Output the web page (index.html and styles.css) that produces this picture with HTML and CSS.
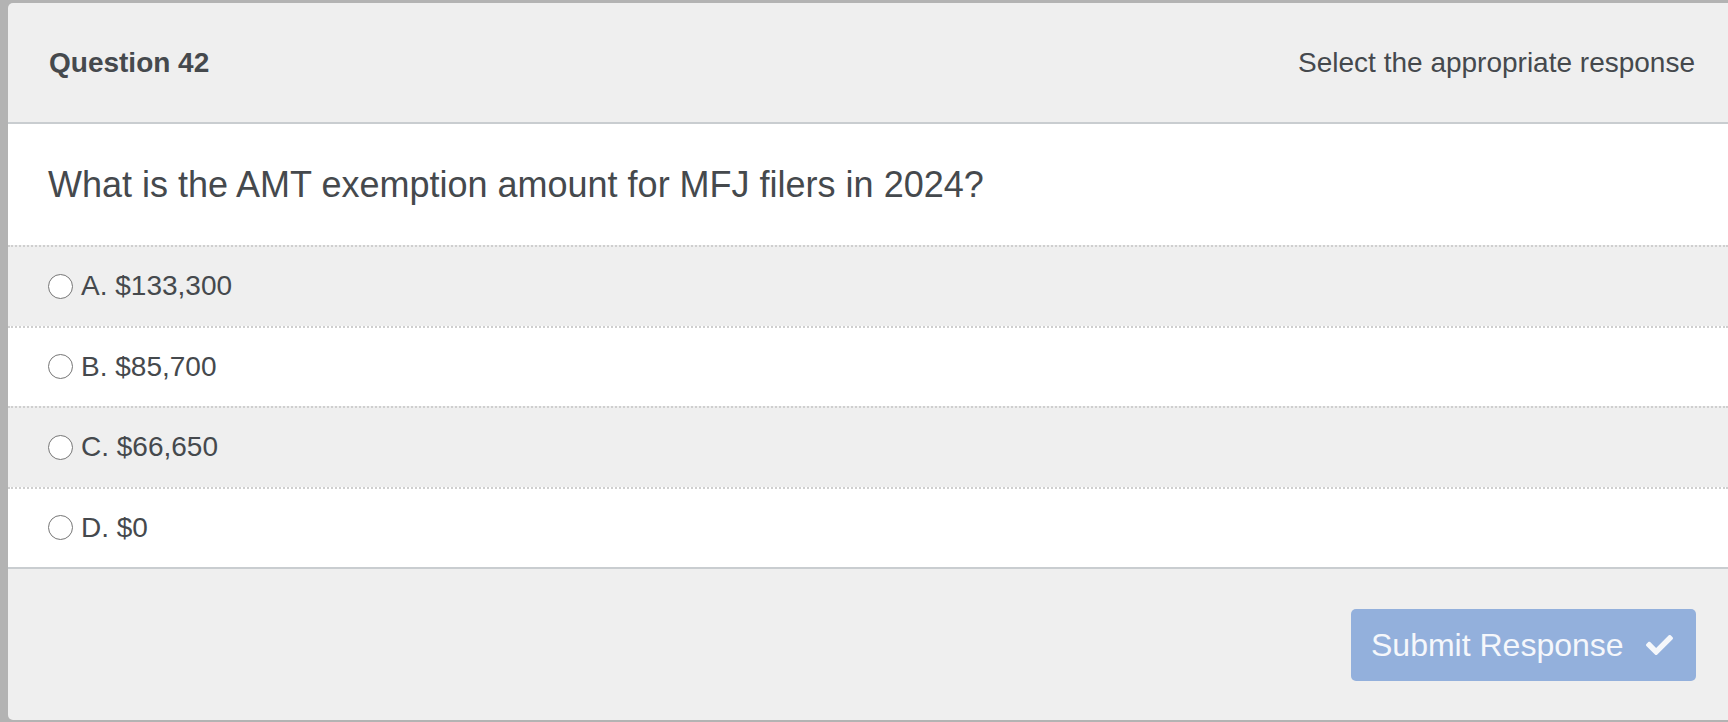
FILE: index.html
```html
<!DOCTYPE html>
<html lang="en">
<head>
<meta charset="utf-8">
<title>Question 42</title>
<link rel="stylesheet" href="styles.css">
</head>
<body>
<div class="card">
  <div class="card-header">
    <span class="q-num">Question 42</span>
    <span class="q-hint">Select the appropriate response</span>
  </div>
  <div class="q-text">What is the AMT exemption amount for MFJ filers in 2024?</div>
  <div class="options">
    <label class="option alt"><span class="radio"></span><span>A. $133,300</span></label>
    <label class="option"><span class="radio"></span><span>B. $85,700</span></label>
    <label class="option alt"><span class="radio"></span><span>C. $66,650</span></label>
    <label class="option"><span class="radio"></span><span>D. $0</span></label>
  </div>
  <div class="card-footer">
    <button class="submit" type="button">
      <span>Submit Response</span>
      <svg class="check" viewBox="0 72 512 368" width="27" height="20" aria-hidden="true"><path fill="currentColor" d="M173.898 439.404l-166.4-166.4c-9.997-9.997-9.997-26.206 0-36.204l36.203-36.204c9.997-9.998 26.207-9.998 36.204 0L192 312.69 432.095 72.596c9.997-9.997 26.207-9.997 36.204 0l36.203 36.204c9.997 9.997 9.997 26.206 0 36.204l-294.4 294.401c-9.998 9.997-26.207 9.997-36.204-.001z"/></svg>
    </button>
  </div>
</div>
</body>
</html>
```

FILE: styles.css
```css
html, body {
  margin: 0;
  padding: 0;
}
body {
  background: #b3b3b3;
  font-family: "Liberation Sans", Arial, Helvetica, sans-serif;
  color: #45494d;
  height: 722px;
  overflow: hidden;
}
.card {
  margin: 3px 0 0 8px;
  height: 717px;
  background: #efefef;
  border-radius: 5px 0 0 5px;
  overflow: hidden;
  display: flex;
  flex-direction: column;
}
.card-header {
  height: 119px;
  display: flex;
  align-items: center;
  justify-content: space-between;
  padding: 0 33px 0 41px;
  font-size: 28px;
  border-bottom: 2px solid #c9cdd0;
}
.q-num {
  font-weight: bold;
}
.q-text {
  background: #fff;
  height: 121px;
  display: flex;
  align-items: center;
  padding-left: 40px;
  font-size: 36px;
  padding-top: 1px;
  box-sizing: border-box;
}
.options {
  display: flex;
  flex-direction: column;
}
.option {
  height: 80.5px;
  box-sizing: border-box;
  border-top: 2px dotted #cfcfcf;
  background: #fff;
  display: flex;
  align-items: center;
  gap: 8px;
  padding-left: 40px;
  font-size: 28px;
}
.option.alt {
  background: #efefef;
}
.radio {
  width: 23px;
  height: 23px;
  border: 1.5px solid #767676;
  border-radius: 50%;
  background: #fff;
  flex: none;
}
.card-footer {
  border-top: 2px solid #c9cdd0;
  flex: 1;
  display: flex;
  justify-content: flex-end;
  align-items: flex-start;
  padding: 40px 32px 0 0;
}
.submit {
  width: 345px;
  height: 72px;
  background: #93b0dc;
  border: none;
  border-radius: 5px;
  color: #f5f7fb;
  font-family: "Liberation Sans", Arial, Helvetica, sans-serif;
  font-size: 32px;
  display: flex;
  align-items: center;
  justify-content: space-between;
  padding: 0 23px 0 20px;
  box-sizing: border-box;
}
.check {
  display: block;
}
```
